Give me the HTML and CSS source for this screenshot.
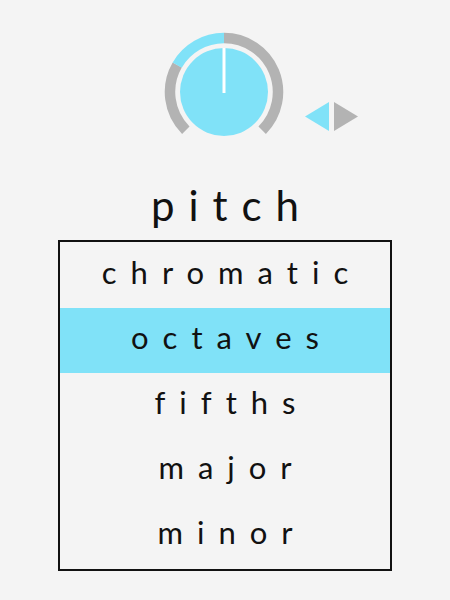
FILE: index.html
```html
<!DOCTYPE html>
<html>
<head>
<meta charset="utf-8">
<link rel="stylesheet" href="styles.css">
</head>
<body>
<div class="panel">
  <div class="header">
    <div class="side"></div>
    <svg class="knob" width="120" height="120" viewBox="0 0 120 120">
      <path d="M21.82 98.18 A54 54 0 0 1 13.23 33" class="arc-off"/>
      <path d="M13.23 33 A54 54 0 0 1 60 6" class="arc-on"/>
      <path d="M60 6 A54 54 0 0 1 98.18 98.18" class="arc-off"/>
      <circle cx="60" cy="60" r="44" class="dial"/>
      <line x1="60" y1="16" x2="60" y2="61" class="needle"/>
    </svg>
    <div class="side">
      <svg class="arrows" width="53" height="29" viewBox="0 0 53 29">
        <polygon points="24,0 0,14.5 24,29" class="arrow-on"/>
        <polygon points="29,0 53,14.5 29,29" class="arrow-off"/>
      </svg>
    </div>
  </div>
  <div class="title">pitch</div>
  <ul class="list">
    <li class="item">chromatic</li>
    <li class="item selected">octaves</li>
    <li class="item">fifths</li>
    <li class="item">major</li>
    <li class="item">minor</li>
  </ul>
</div>
</body>
</html>
```

FILE: styles.css
```css
html, body {
  margin: 0;
  padding: 0;
  background: #f4f4f4;
}
body {
  width: 450px;
  height: 600px;
  font-family: Lato, "Open Sans", sans-serif;
  color: #111;
}
.panel {
  display: flex;
  flex-direction: column;
  align-items: center;
  padding-top: 32px;
}
.header {
  width: 100%;
  display: grid;
  grid-template-columns: 1fr 120px 1fr;
}
.knob {
  display: block;
  margin-left: -1px;
}
.arc-off, .arc-on {
  fill: none;
  stroke-width: 10.5;
}
.arc-off { stroke: #b3b3b3; }
.arc-on { stroke: #80e2f8; }
.dial { fill: #80e2f8; }
.needle {
  stroke: #ffffff;
  stroke-width: 3;
}
.arrows {
  display: block;
  margin-top: 70px;
  margin-left: 20px;
}
.arrow-on { fill: #80e2f8; }
.arrow-off { fill: #b3b3b3; }
.title {
  margin-top: 28px;
  height: 50px;
  font-size: 42px;
  line-height: 50px;
  letter-spacing: 14px;
  padding-left: 14px;
  margin-bottom: 10px;
}
.list {
  list-style: none;
  margin: 0;
  padding: 1px 0 1px 0;
  width: 330px;
  border: 2px solid #111;
}
.item {
  height: 65px;
  box-sizing: border-box;
  line-height: 59px;
  padding-bottom: 6px;
  padding-left: 14px;
  text-align: center;
  font-size: 31px;
  letter-spacing: 14px;
}
.selected {
  background: #80e2f8;
}
```
